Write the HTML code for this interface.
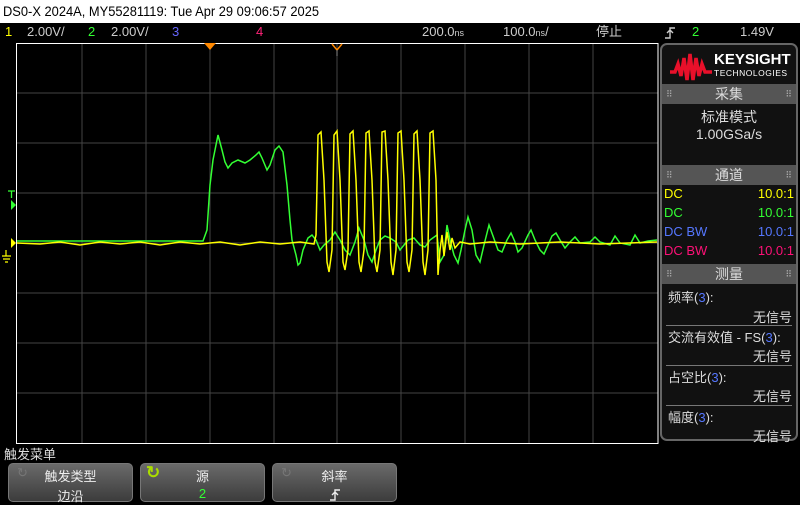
<!DOCTYPE html>
<html><head><meta charset="utf-8"><style>
*{margin:0;padding:0;box-sizing:border-box}
body{width:800px;height:503px;background:#000;position:relative;overflow:hidden;font-family:"Liberation Sans","Noto Sans CJK SC",sans-serif;color:#ddd}
.a{position:absolute;white-space:nowrap}
#title{left:0;top:0;width:800px;height:23px;background:#fff;color:#000;font-size:14px;line-height:23px;padding-left:3px}
#title span{display:inline-block;transform:scaleX(0.92);transform-origin:left}
.st{top:23px;font-size:13px;line-height:18px}
.panel{position:absolute;left:660px;top:43px;width:138px;height:398px;border:2px solid #666;border-radius:7px;background:#111}
.hd{position:absolute;left:0;width:134px;height:20px;background:#555;color:#ddd;text-align:center;font-size:14px;line-height:20px}
.hd:before,.hd:after{content:"⠿";position:absolute;top:0;font-size:9px;color:#aaa}
.hd:before{left:4px}.hd:after{right:4px}
.p{font-size:13px;position:absolute}
.btn{position:absolute;top:463px;width:125px;height:39px;border-radius:5px;background:linear-gradient(#6a6a6a,#3c3c3c);border:1px solid #777;text-align:center;font-size:13px;color:#eee}
.sep{position:absolute;width:126px;height:1px;background:#777}
</style></head><body>
<div id="title" class="a"><span>DS0-X 2024A, MY55281119: Tue Apr 29 09:06:57 2025</span></div>
<div class="a st" style="left:5px;color:#ff0">1</div>
<div class="a st" style="left:27px;color:#ccc">2.00V/</div>
<div class="a st" style="left:88px;color:#3f3">2</div>
<div class="a st" style="left:111px;color:#ccc">2.00V/</div>
<div class="a st" style="left:172px;color:#66f">3</div>
<div class="a st" style="left:256px;color:#f27">4</div>
<div class="a st" style="left:422px;color:#ccc">200.0<span style="font-size:9px">ns</span></div>
<div class="a st" style="left:503px;color:#ccc">100.0<span style="font-size:9px">ns</span>/</div>
<div class="a st" style="left:596px;color:#ccc">停止</div>
<svg class="a" style="left:664px;top:26px" width="12" height="14"><path d="M1 12 H6 V2 H11 M3 7 L6 4 L9 7" fill="none" stroke="#ccc" stroke-width="1.4"/></svg>
<div class="a st" style="left:692px;color:#3f3">2</div>
<div class="a st" style="left:740px;color:#ccc">1.49V</div>

<svg class="a" style="left:0;top:0" width="660" height="450">
<g stroke="#444" stroke-width="1">
<line x1="82" y1="43" x2="82" y2="443"/><line x1="146" y1="43" x2="146" y2="443"/><line x1="210" y1="43" x2="210" y2="443"/><line x1="274" y1="43" x2="274" y2="443"/><line x1="337" y1="43" x2="337" y2="443"/><line x1="401" y1="43" x2="401" y2="443"/><line x1="465" y1="43" x2="465" y2="443"/><line x1="529" y1="43" x2="529" y2="443"/><line x1="593" y1="43" x2="593" y2="443"/>
<line x1="17" y1="93" x2="658" y2="93"/><line x1="17" y1="143" x2="658" y2="143"/><line x1="17" y1="193" x2="658" y2="193"/><line x1="17" y1="243" x2="658" y2="243"/><line x1="17" y1="293" x2="658" y2="293"/><line x1="17" y1="343" x2="658" y2="343"/><line x1="17" y1="393" x2="658" y2="393"/>
</g>
<rect x="16.5" y="43.5" width="641.5" height="400" fill="none" stroke="#fff"/>
<polygon points="204,43 216,43 210,50" fill="#f80"/>
<polyline points="332,44 337,50 342,44" fill="none" stroke="#f80" stroke-width="1.5"/>
<line x1="337" y1="50" x2="337" y2="56" stroke="#888"/>
<path d="M8 191 h7 M11.5 191 v7" stroke="#3f3" stroke-width="1.3"/>
<polygon points="11,200 16,205 11,210" fill="#3f3"/>
<polygon points="11,238 16,243 11,248" fill="#ff0"/>
<polyline fill="none" stroke="#3f3" stroke-width="1.5" points="17,241 203,241 207,230 210,185 213,160 218,135 222,150 225,162 228,168 232,163 238,160 245,163 250,160 256,155 259,152 262,158 267,170 270,165 275,150 279,146 283,152 287,185 290,220 292,240 296,255 298,265 300,263 303,250 308,238 312,235 316,240 320,250 324,245 330,240 335,232 340,240 345,250 350,255 355,242 359,228 364,240 368,255 372,262 376,250 380,240 385,236 390,238 396,242 400,250 404,245 408,240 414,238 420,245 425,247 430,240 437,235 440,262 444,255 447,225 450,240 454,255 458,263 461,250 465,230 468,217 472,230 476,255 480,262 484,245 489,225 493,236 498,250 502,252 507,240 511,233 515,242 518,252 522,248 528,235 531,230 535,240 540,250 544,254 548,245 552,236 556,233 560,240 565,248 570,242 575,237 580,243 590,242 595,237 600,242 610,245 615,236 620,243 630,245 635,235 640,243 648,241 657,240"/>
<polyline fill="none" stroke="#ff0" stroke-width="1.5" points="17,243 40,244 60,242 80,245 100,242 120,244 140,242 160,245 180,242 200,244 220,242 240,245 260,242 280,244 300,242 314,244 316,235 318,135 321,132 324,180 327,262 329,272 332,250 334,135 337,131 340,180 343,262 345,270 348,250 350,134 353,131 356,180 359,262 361,272 364,250 366,133 369,131 372,180 375,262 377,272 380,250 382,132 385,131 388,180 391,262 393,275 396,250 398,133 401,131 404,180 407,262 409,272 412,250 414,134 417,131 420,180 423,262 425,275 428,250 430,133 433,131 436,180 438,275 440,250 442,235 444,256 447,232 450,250 452,238 455,248 460,242 470,244 490,242 520,244 560,242 600,244 657,242"/>
<path d="M6 250 v6 M2 256 h9 M3 259 h7 M5 262 h3" stroke="#ff0" stroke-width="1.2"/>
</svg>

<div class="panel">
<svg class="a" style="left:8px;top:7px" width="45" height="30"><polyline points="0,20 5,20 8,12 11,24 14,6 17,28 20,2 23,28 26,6 29,24 32,12 35,20 42,20" fill="none" stroke="#e8102a" stroke-width="3.5"/></svg>
<div class="a" style="left:52px;top:6px;font-size:15px;font-weight:bold;color:#fff">KEYSIGHT</div>
<div class="a" style="left:52px;top:23px;font-size:8.5px;color:#fff;letter-spacing:0.5px">TECHNOLOGIES</div>
<div class="hd" style="top:39px">采集</div>
<div class="p" style="top:62px;width:134px;text-align:center;font-size:14px">标准模式</div>
<div class="p" style="top:81px;width:134px;text-align:center;font-size:14px">1.00GSa/s</div>
<div class="hd" style="top:120px">通道</div>
<div class="p" style="top:141px;left:2px;color:#ff0">DC</div><div class="p" style="top:141px;right:2px;color:#ff0">10.0:1</div>
<div class="p" style="top:160px;left:2px;color:#3f3">DC</div><div class="p" style="top:160px;right:2px;color:#3f3">10.0:1</div>
<div class="p" style="top:179px;left:2px;color:#57f">DC BW</div><div class="p" style="top:179px;right:2px;color:#57f">10.0:1</div>
<div class="p" style="top:198px;left:2px;color:#f17">DC BW</div><div class="p" style="top:198px;right:2px;color:#f17">10.0:1</div>
<div class="hd" style="top:219px">测量</div>
<div class="p" style="top:242px;left:6px">频率(<span style="color:#57f">3</span>):</div>
<div class="p" style="top:262px;right:4px">无信号</div>
<div class="sep" style="top:280px;left:4px"></div>
<div class="p" style="top:282px;left:6px">交流有效值 - FS(<span style="color:#57f">3</span>):</div>
<div class="p" style="top:301px;right:4px">无信号</div>
<div class="sep" style="top:320px;left:4px"></div>
<div class="p" style="top:322px;left:6px">占空比(<span style="color:#57f">3</span>):</div>
<div class="p" style="top:341px;right:4px">无信号</div>
<div class="sep" style="top:360px;left:4px"></div>
<div class="p" style="top:362px;left:6px">幅度(<span style="color:#57f">3</span>):</div>
<div class="p" style="top:381px;right:4px">无信号</div>
</div>

<div class="a" style="left:4px;top:444px;font-size:13px;color:#ddd">触发菜单</div>
<div class="btn" style="left:8px"><div style="margin-top:2px">触发类型</div><div style="margin-top:1px">边沿</div><span class="a" style="left:8px;top:1px;color:#777;font-size:13px">↻</span></div>
<div class="btn" style="left:140px"><div style="margin-top:2px">源</div><div style="margin-top:1px;color:#3f3">2</div><span class="a" style="left:5px;top:-1px;color:#ad0;font-size:17px;font-weight:bold">↻</span></div>
<div class="btn" style="left:272px"><div style="margin-top:2px">斜率</div><svg style="margin-top:3px" width="12" height="13"><path d="M1 12 H6 V2 H11 M3 7 L6 4 L9 7" fill="none" stroke="#eee" stroke-width="1.4"/></svg><span class="a" style="left:8px;top:1px;color:#777;font-size:13px">↻</span></div>
</body></html>
